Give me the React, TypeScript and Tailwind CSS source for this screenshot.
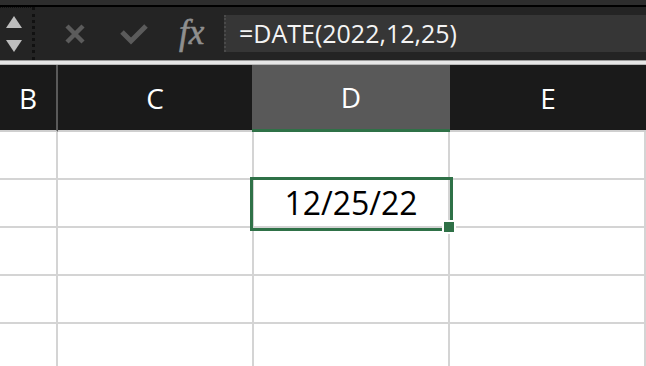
import React from "react";

const font = { fontFamily: '"Open Sans", "Liberation Sans", sans-serif' };

function XIcon() {
  return (
    <svg width="22" height="22" viewBox="0 0 22 22">
      <path d="M3 3 L19 19 M19 3 L3 19" stroke="#5b5b5b" strokeWidth="4.5" strokeLinecap="butt" fill="none" />
    </svg>
  );
}

function CheckIcon() {
  return (
    <svg width="28" height="22" viewBox="0 0 28 22">
      <path d="M2 9 L11 18 L26 3" stroke="#5b5b5b" strokeWidth="5" fill="none" />
    </svg>
  );
}

export default function App() {
  const rows = [0, 1, 2, 3, 4];
  return (
    <div className="w-[646px] h-[366px] overflow-hidden bg-white flex flex-col" style={font}>
      <div className="h-[5px] bg-[#2d2d2d] shrink-0" />
      <div className="h-[2px] bg-black shrink-0" />
      {/* formula bar */}
      <div className="h-[53px] bg-[#242424] flex items-center shrink-0">
        <div className="w-[35px] h-full border-r-[3px] border-dotted border-[#111] border-t border-t-[#111] flex flex-col items-center justify-center gap-[12px] pr-[4px]">
          <svg width="16" height="12" viewBox="0 0 16 12">
            <path d="M8 0 L16 12 L0 12 Z" fill="#bdbdbd" />
          </svg>
          <svg width="16" height="12" viewBox="0 0 16 12">
            <path d="M0 0 L16 0 L8 12 Z" fill="#bdbdbd" />
          </svg>
        </div>
        <div className="w-[29px]" />
        <XIcon />
        <div className="w-[34px]" />
        <CheckIcon />
        <div className="w-[31px]" />
        <div
          className="text-[#8f8f8f] italic text-[35px] leading-none w-[45px] mb-[3px] [-webkit-text-stroke:0.6px_#8f8f8f]"
          style={{ fontFamily: '"Liberation Serif", "DejaVu Serif", serif' }}
        >
          fx
        </div>
        <div className="flex-1 h-[37px] bg-[#363636] border-l-2 border-dotted border-[#4a4a4a] flex items-center pl-[13px]">
          <span className="text-[#f4f4f4] text-[25px] leading-none">=DATE(2022,12,25)</span>
        </div>
      </div>
      {/* separator strip */}
      <div className="h-[5px] shrink-0 bg-[#e6e6e6] border-t border-t-[#9c9c9c] border-b border-b-[#b8b8b8]" />
      {/* header */}
      <div className="h-[67px] shrink-0 flex bg-[#1a1a1a] text-white text-[28px]">
        <div className="w-[58px] h-full border-r-2 border-[#5a5a5a] border-b-2 border-b-[#cfcfcf] flex items-center justify-center">B</div>
        <div className="w-[194px] h-full border-b-2 border-b-[#cfcfcf] flex items-center justify-center">C</div>
        <div className="w-[198px] h-full bg-[#595959] border-b-[3px] border-b-[#2f7147] flex items-center justify-center">D</div>
        <div className="w-[196px] h-full border-b-2 border-b-[#cfcfcf] flex items-center justify-center">E</div>
      </div>
      {/* body */}
      <div className="relative flex-1">
        {rows.map((r) => (
          <div key={r} className="h-[48px] flex border-b-2 border-[#d4d4d4]">
            <div className="w-[58px] h-full border-r-2 border-[#d4d4d4]" />
            <div className="w-[196px] h-full border-r-2 border-[#d4d4d4]" />
            <div className="w-[196px] h-full border-r-2 border-[#d4d4d4] flex items-center justify-center text-black text-[32px]">
              {r === 1 ? "12/25/22" : ""}
            </div>
            <div className="w-[196px] h-full border-r-2 border-[#d4d4d4]" />
          </div>
        ))}
        <div className="absolute left-[250px] top-[45px] w-[203px] h-[54px] border-[3px] border-[#2f7147]" />
        <div className="absolute left-[442px] top-[88px] w-[14px] h-[14px] bg-[#2f7147] border-2 border-white" />
      </div>
    </div>
  );
}
